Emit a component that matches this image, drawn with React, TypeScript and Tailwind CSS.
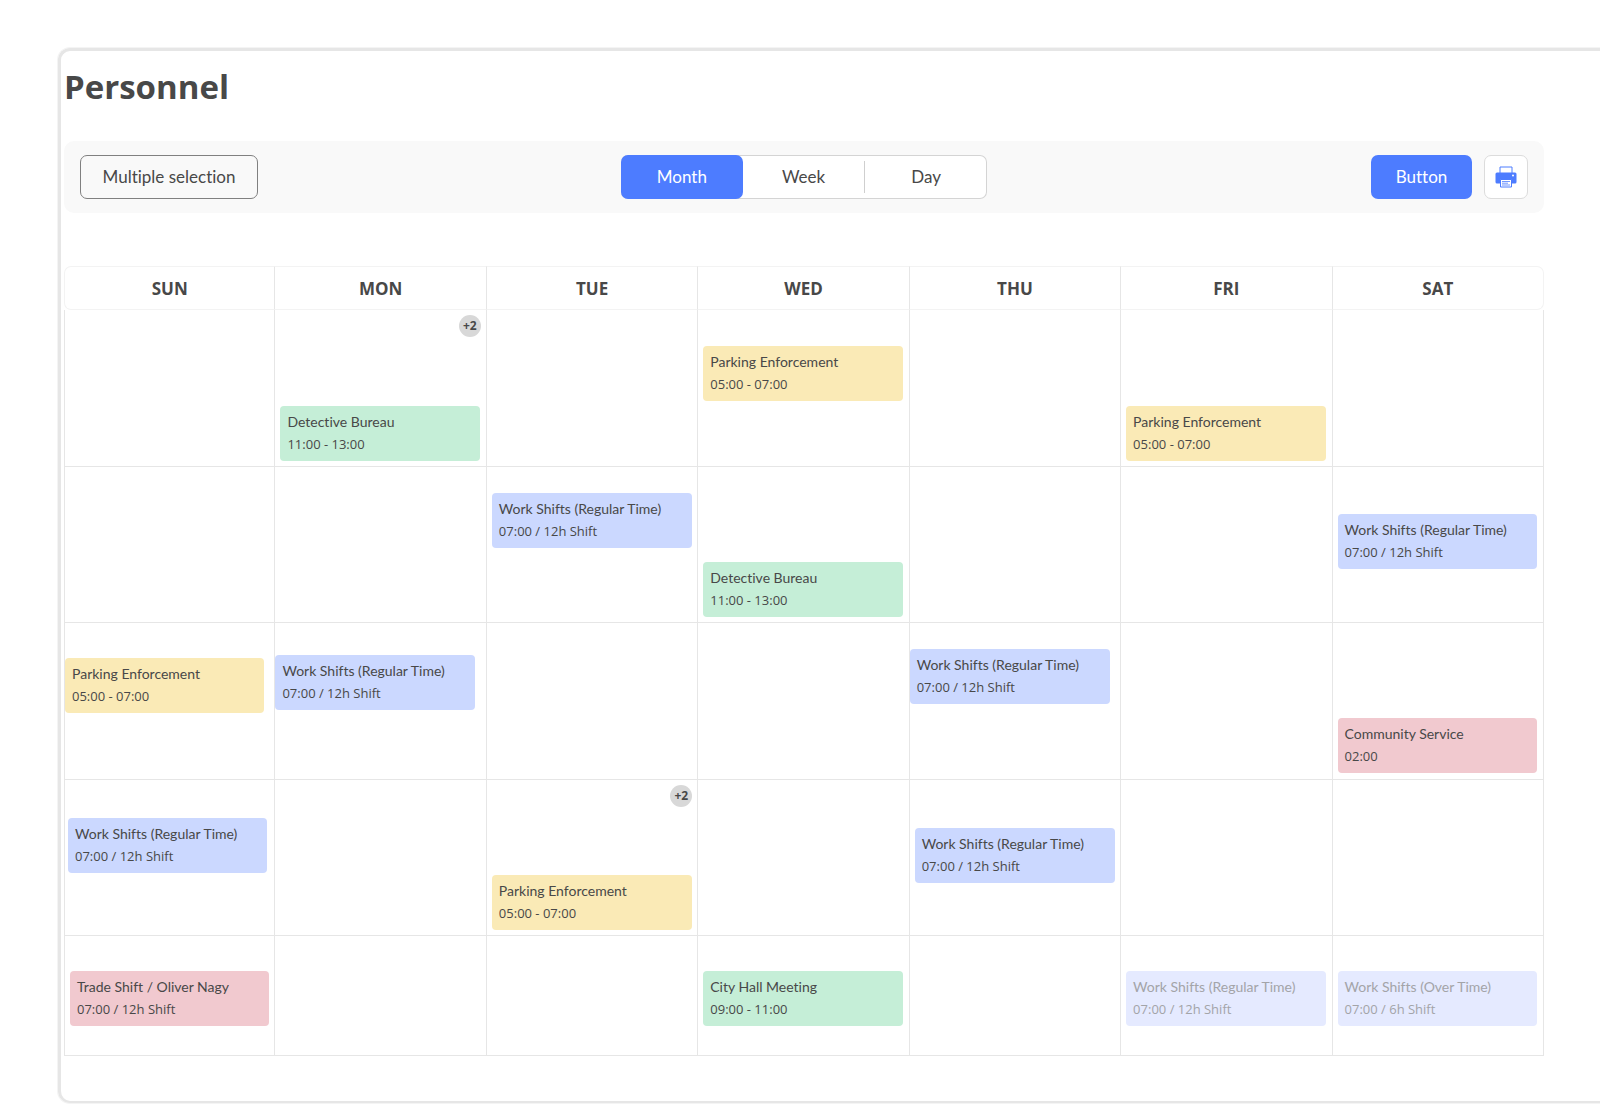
import React, { useState } from "react";

type Shift = {
  title: string;
  time: string;
  color: string;
  // where in the cell the card starts
  offset: string;
};

type Cell = {
  shift?: Shift;
  more?: number;
};

const days = ["SUN", "MON", "TUE", "WED", "THU", "FRI", "SAT"];
const views = ["Month", "Week", "Day"];

const yellow = "bg-[#faeab6] text-[#484848]";
const green = "bg-[#c5eed7] text-[#484848]";
const blue = "bg-[#cbd8ff] text-[#484848]";
const red = "bg-[#f1c9cf] text-[#484848]";
const faded = "bg-[#e5eaff] text-[#a3a4a8]";

const parking = (offset: string): Shift => ({ title: "Parking Enforcement", time: "05:00 - 07:00", color: yellow, offset });
const detective = (offset: string): Shift => ({ title: "Detective Bureau", time: "11:00 - 13:00", color: green, offset });
const regular = (offset: string, color = blue): Shift => ({ title: "Work Shifts (Regular Time)", time: "07:00 / 12h Shift", color, offset });

const weeks: Cell[][] = [
  [
    {},
    { shift: detective("mt-24 ml-[5px]"), more: 2 },
    {},
    { shift: parking("mt-9 ml-[5px]") },
    {},
    { shift: parking("mt-24 ml-[5px]") },
    {},
  ],
  [
    {},
    {},
    { shift: regular("mt-[26px] ml-[5px]") },
    { shift: detective("mt-[95px] ml-[5px]") },
    {},
    {},
    { shift: regular("mt-[47px] ml-[5px]") },
  ],
  [
    { shift: parking("mt-[35px]") },
    { shift: regular("mt-8") },
    {},
    {},
    { shift: regular("mt-[26px]") },
    {},
    { shift: { title: "Community Service", time: "02:00", color: red, offset: "mt-[95px] ml-[5px]" } },
  ],
  [
    { shift: regular("mt-[38px] ml-[3px]") },
    {},
    { shift: parking("mt-[95px] ml-[5px]"), more: 2 },
    {},
    { shift: regular("mt-12 ml-[5px]") },
    {},
    {},
  ],
  [
    { shift: { title: "Trade Shift / Oliver Nagy", time: "07:00 / 12h Shift", color: red, offset: "mt-[35px] ml-[5px]" } },
    {},
    {},
    { shift: { title: "City Hall Meeting", time: "09:00 - 11:00", color: green, offset: "mt-[35px] ml-[5px]" } },
    {},
    { shift: regular("mt-[35px] ml-[5px]", faded) },
    { shift: { title: "Work Shifts (Over Time)", time: "07:00 / 6h Shift", color: faded, offset: "mt-[35px] ml-[5px]" } },
  ],
];

const PrinterIcon = () => (
  <svg viewBox="0 0 22 22" className="w-[22px] h-[22px]" fill="none" aria-hidden="true">
    <path d="M5 7V1h12v6" stroke="#4d7cff" />
    <path d="M2 6.5h18a1.5 1.5 0 0 1 1.5 1.5v8a1.5 1.5 0 0 1-1.5 1.5H2A1.5 1.5 0 0 1 .5 16V8A1.5 1.5 0 0 1 2 6.5z" fill="#4d7cff" />
    <circle cx="18" cy="9.5" r="1" fill="#fff" />
    <path d="M5.5 13.5h11V21h-11z" fill="#fff" stroke="#4d7cff" />
    <path d="M7 15.5h8M7 17.2h6M7 19h8" stroke="#4d7cff" strokeWidth="0.8" />
  </svg>
);

const ShiftCard = ({ shift }: { shift: Shift }) => (
  <article className={`w-[95%] rounded-[4px] px-[7px] pt-[5px] pb-[6px] ${shift.color} ${shift.offset}`}>
    <h2 className="font-['Lato',sans-serif] text-[14px] leading-[22px] whitespace-nowrap">{shift.title}</h2>
    <p className="text-[13px] leading-[22px] whitespace-nowrap">{shift.time}</p>
  </article>
);

const App = () => {
  const [view, setView] = useState("Month");

  return (
    <div className="min-h-screen bg-white pt-12 pl-[58px] overflow-hidden font-['Open_Sans',sans-serif] [font-variant-ligatures:none] text-[#484848]">
      <main className="border-[3px] border-r-0 border-b-2 border-[#e6e6e6] rounded-l-[12px] shadow-[0_0_0_1px_#f4f4f4] pt-4 pl-[3px] pr-14 pb-[45px]">
        <h1 className="text-[33px] leading-10 font-bold">Personnel</h1>

        <div className="mt-[34px] h-[72px] px-4 grid grid-cols-[1fr_auto_1fr] items-center bg-[#f9f9f9] rounded-[10px] font-['Lato',sans-serif] text-[17px]">
          <button type="button" className="justify-self-start h-11 w-[178px] border border-[#808080] rounded-[7px] whitespace-nowrap">
            Multiple selection
          </button>

          <div className="flex items-center w-[366px] h-11 bg-white rounded-[7px] ring-1 ring-inset ring-[#d4d4d4]">
            {views.map((v) => (
              <React.Fragment key={v}>
                {v === "Day" && <span className="w-px h-8 bg-[#cfcfcf]"></span>}
                <button
                  type="button"
                  onClick={() => setView(v)}
                  className={`flex-1 h-full rounded-[7px] ${view === v ? "bg-[#4d7cff] text-white" : ""}`}
                >
                  {v}
                </button>
              </React.Fragment>
            ))}
          </div>

          <div className="justify-self-end flex gap-3">
            <button type="button" className="w-[101px] h-11 rounded-[7px] bg-[#4d7cff] text-white">
              Button
            </button>
            <button type="button" aria-label="Print" className="w-11 h-11 flex items-center justify-center bg-white border border-[#dcdcdc] rounded-[7px]">
              <PrinterIcon />
            </button>
          </div>
        </div>

        <table className="mt-[53px] w-full table-fixed border-separate border-spacing-0">
          <thead>
            <tr>
              {days.map((day) => (
                <th
                  key={day}
                  scope="col"
                  className="h-11 p-0 pt-0.5 text-[17px] font-bold border-y border-r border-y-[#f3f3f3] border-r-[#e6e6e6] first:border-l first:border-l-[#f3f3f3] first:rounded-l-[7px] last:rounded-r-[7px] last:border-r-[#f3f3f3]"
                >
                  {day}
                </th>
              ))}
            </tr>
          </thead>
          <tbody>
            {weeks.map((week, i) => (
              <tr key={i} className="odd:h-[157px] even:h-[156px] last:h-[120px]!">
                {week.map((cell, j) => (
                  <td key={j} className="relative p-0 align-top border-r border-b border-[#e6e6e6] first:border-l">
                    {cell.more && (
                      <span className="absolute top-[5px] right-[5px] w-[22px] h-[22px] rounded-full bg-[#d8d8d8] text-[12px] leading-[21px] font-bold text-center">
                        +{cell.more}
                      </span>
                    )}
                    {cell.shift && <ShiftCard shift={cell.shift} />}
                  </td>
                ))}
              </tr>
            ))}
          </tbody>
        </table>
      </main>
    </div>
  );
};

export default App;
